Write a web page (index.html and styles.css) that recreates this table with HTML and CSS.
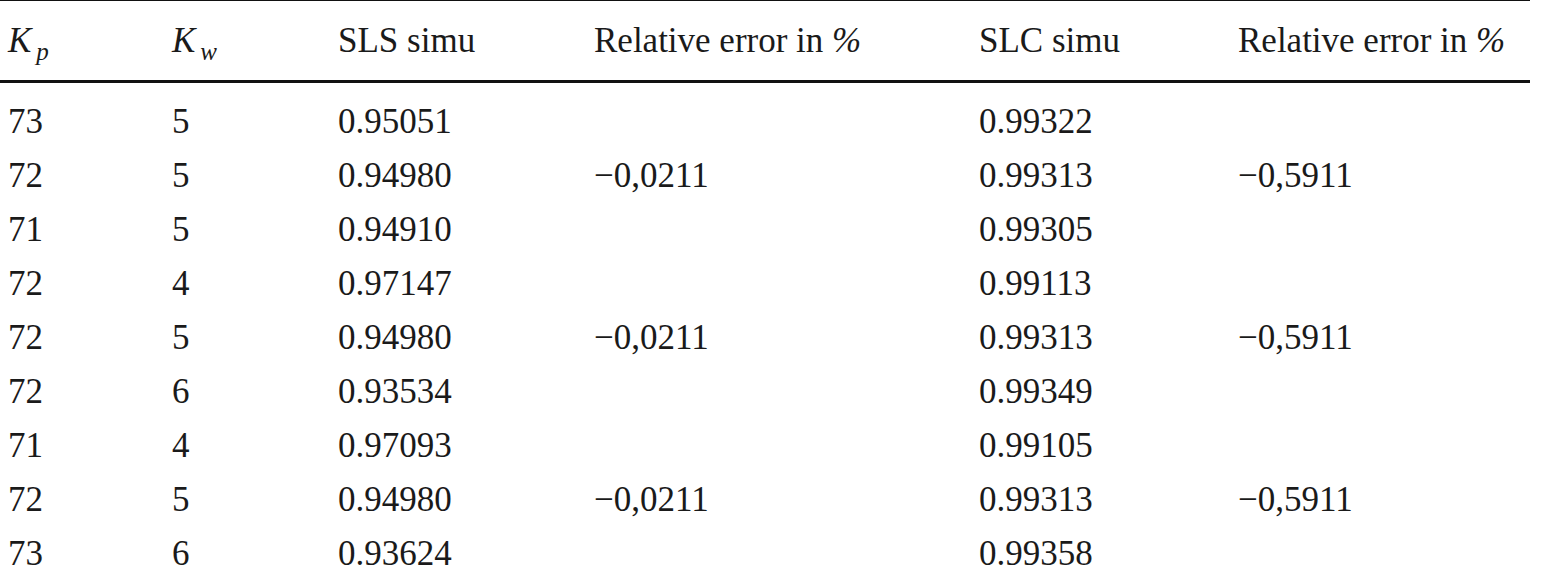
FILE: index.html
```html
<!DOCTYPE html>
<html>
<head>
<meta charset="utf-8">
<title>Relative error table</title>
<link rel="stylesheet" href="styles.css">
</head>
<body>
<table class="results">
    <colgroup>
        <col class="c1">
        <col class="c2">
        <col class="c3">
        <col class="c4">
        <col class="c5">
        <col class="c6">
    </colgroup>
    <thead>
        <tr>
            <th><i>K</i><sub>p</sub></th>
            <th><i>K</i><sub>w</sub></th>
            <th>SLS simu</th>
            <th>Relative error in <i>%</i></th>
            <th>SLC simu</th>
            <th>Relative error in <i>%</i></th>
        </tr>
    </thead>
    <tbody>
        <tr class="first"><td>73</td><td>5</td><td>0.95051</td><td></td><td>0.99322</td><td></td></tr>
        <tr><td>72</td><td>5</td><td>0.94980</td><td>&minus;0,0211</td><td>0.99313</td><td>&minus;0,5911</td></tr>
        <tr><td>71</td><td>5</td><td>0.94910</td><td></td><td>0.99305</td><td></td></tr>
        <tr><td>72</td><td>4</td><td>0.97147</td><td></td><td>0.99113</td><td></td></tr>
        <tr><td>72</td><td>5</td><td>0.94980</td><td>&minus;0,0211</td><td>0.99313</td><td>&minus;0,5911</td></tr>
        <tr><td>72</td><td>6</td><td>0.93534</td><td></td><td>0.99349</td><td></td></tr>
        <tr><td>71</td><td>4</td><td>0.97093</td><td></td><td>0.99105</td><td></td></tr>
        <tr><td>72</td><td>5</td><td>0.94980</td><td>&minus;0,0211</td><td>0.99313</td><td>&minus;0,5911</td></tr>
        <tr><td>73</td><td>6</td><td>0.93624</td><td></td><td>0.99358</td><td></td></tr>
    </tbody>
</table>
</body>
</html>
```

FILE: styles.css
```css
body {
    margin: 0;
    background-color: #fff;
    color: #1a1a1a;
    font-family: "Liberation Serif", "Times New Roman", serif;
    font-size: 35px;
}

.results {
    width: 1530px;
    border-collapse: collapse;
    table-layout: fixed;
    border-top: 1px solid #111;
}

.c1 { width: 164px; }
.c2 { width: 166px; }
.c3 { width: 256px; }
.c4 { width: 385px; }
.c5 { width: 259px; }
.c6 { width: 300px; }

.results th,
.results td {
    padding: 0 0 0 8px;
    text-align: left;
    font-weight: normal;
    line-height: 54px;
    white-space: nowrap;
}

.results thead th {
    height: 79px;
    vertical-align: middle;
    border-bottom: 3px solid #111;
}

.results thead i {
    font-style: italic;
}

.results sub {
    font-style: italic;
    font-size: 25px;
    line-height: 0;
    vertical-align: -8px;
    margin-left: 5px;
}

.results tbody td {
    height: 54px;
    vertical-align: top;
}

.results tbody tr.first td {
    padding-top: 12px;
}
```
